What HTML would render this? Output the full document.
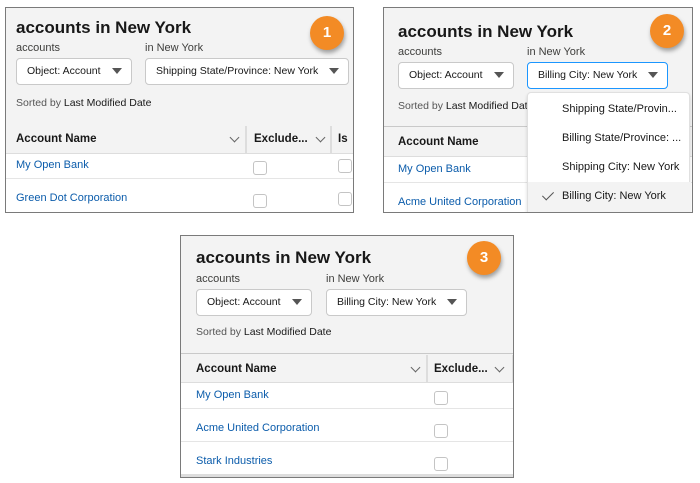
<!DOCTYPE html>
<html><head><style>
*{box-sizing:border-box;margin:0;padding:0}
body{width:700px;height:483px;background:#fff;position:relative;overflow:hidden;font-family:"Liberation Sans",Arial,sans-serif;color:#181818}
.p{position:absolute;border:1px solid #7a7a7a;background:#fff;overflow:hidden}
.hd{position:absolute;left:0;right:0;top:0;background:#f3f3f3;border-bottom:1px solid #c9c9c9}
.a{position:absolute;white-space:nowrap}
.t{font-size:17px;font-weight:bold}
.l{font-size:11px;color:#3e3e3c}
.s{position:absolute;height:27px;border:1px solid #c9c9c9;border-radius:4px;background:#fff;font-size:10.5px;padding:0 0 0 10px;line-height:25px;white-space:nowrap}
.s:after{content:"";position:absolute;right:9px;top:9px;border-left:5px solid transparent;border-right:5px solid transparent;border-top:6px solid #555}
.so{font-size:10.5px;color:#555}
.so b{font-weight:normal;color:#181818}
.th{position:absolute;left:0;right:0;background:#f3f3f3;border-bottom:1px solid #ddd;font-size:11.5px;font-weight:bold}
.cv{position:absolute;width:7px;height:7px;border-right:1.3px solid #666;border-bottom:1.3px solid #666;transform:rotate(45deg)}
.dv{position:absolute;width:2px;background:#ddd}
.lk{position:absolute;font-size:11px;color:#0b5cab;white-space:nowrap}
.cb{position:absolute;width:14px;height:14px;border:1px solid #c4c4c4;border-radius:3px;background:#fff}
.rl{position:absolute;left:0;right:0;height:1px;background:#e5e5e5}
.bd{position:absolute;width:34px;height:34px;border-radius:50%;background:#f38b25;color:#fff;font-weight:bold;font-size:15px;text-align:center;line-height:34px;box-shadow:1px 3px 4px rgba(0,0,0,.35)}
</style></head><body>

<!-- Panel 1 -->
<div class="p" style="left:5px;top:7px;width:349px;height:206px">
 <div class="hd" style="height:118px"></div>
 <div class="a t" style="left:10px;top:10px">accounts in New York</div>
 <div class="a l" style="left:10px;top:34px">accounts</div>
 <div class="a l" style="left:139px;top:34px">in New York</div>
 <div class="s" style="left:10px;top:50px;width:116px">Object: Account</div>
 <div class="s" style="left:139px;top:50px;width:204px">Shipping State/Province: New York</div>
 <div class="a so" style="left:10px;top:89px">Sorted by <b>Last Modified Date</b></div>
 <div class="th" style="top:117px;height:29px"><span class="a" style="left:10px;top:8px">Account Name</span><span class="a" style="left:248px;top:8px">Exclude...</span><span class="a" style="left:332px;top:8px">Is</span></div>
 <div class="cv" style="left:225px;top:126px"></div><div class="cv" style="left:311px;top:126px"></div>
 <div class="dv" style="left:239px;top:118px;height:27px"></div><div class="dv" style="left:324px;top:118px;height:27px"></div>
 <div class="lk" style="left:10px;top:151px">My Open Bank</div>
 <div class="cb" style="left:247px;top:153px"></div><div class="cb" style="left:332px;top:151px"></div>
 <div class="rl" style="top:170px"></div>
 <div class="lk" style="left:10px;top:184px">Green Dot Corporation</div>
 <div class="cb" style="left:247px;top:186px"></div><div class="cb" style="left:332px;top:184px"></div>
 <div class="bd" style="left:304px;top:8px">1</div>
</div>

<!-- Panel 2 -->
<div class="p" style="left:383px;top:7px;width:310px;height:206px">
 <div class="hd" style="height:119px"></div>
 <div class="a t" style="left:14px;top:14px">accounts in New York</div>
 <div class="a l" style="left:14px;top:38px">accounts</div>
 <div class="a l" style="left:143px;top:38px">in New York</div>
 <div class="s" style="left:14px;top:54px;width:116px">Object: Account</div>
 <div class="s" style="left:143px;top:54px;width:141px;border-color:#1b96ff">Billing City: New York</div>
 <div class="a so" style="left:14px;top:92px">Sorted by <b>Last Modified Date</b></div>
 <div class="th" style="top:119px;height:30px"><span class="a" style="left:14px;top:9px">Account Name</span></div>
 <div class="lk" style="left:14px;top:155px">My Open Bank</div>
 <div class="rl" style="top:174px"></div>
 <div class="lk" style="left:14px;top:188px">Acme United Corporation</div>
 <div class="a" style="left:143px;top:84px;width:163px;height:125px;background:#fff;border:1px solid #e0e0e0;border-radius:4px;box-shadow:0 2px 3px rgba(0,0,0,.15);font-size:11px">
  <div class="a" style="left:34px;top:10px">Shipping State/Provin...</div>
  <div class="a" style="left:34px;top:39px">Billing State/Province: ...</div>
  <div class="a" style="left:34px;top:68px">Shipping City: New York</div>
  <div class="a" style="left:0;top:89px;width:163px;height:34px;background:#f3f3f3"></div>
  <div class="a" style="left:34px;top:97px">Billing City: New York</div>
  <div class="a" style="left:17px;top:96px;width:6px;height:11px;border-right:1.3px solid #555;border-bottom:1.3px solid #555;transform:rotate(45deg)"></div>
 </div>
 <div class="bd" style="left:266px;top:6px">2</div>
</div>

<!-- Panel 3 -->
<div class="p" style="left:180px;top:235px;width:334px;height:243px">
 <div class="hd" style="height:118px"></div>
 <div class="a t" style="left:15px;top:12px">accounts in New York</div>
 <div class="a l" style="left:15px;top:37px">accounts</div>
 <div class="a l" style="left:145px;top:37px">in New York</div>
 <div class="s" style="left:15px;top:53px;width:116px">Object: Account</div>
 <div class="s" style="left:145px;top:53px;width:141px">Billing City: New York</div>
 <div class="a so" style="left:15px;top:90px">Sorted by <b>Last Modified Date</b></div>
 <div class="th" style="top:118px;height:29px"><span class="a" style="left:15px;top:9px">Account Name</span><span class="a" style="left:253px;top:9px">Exclude...</span></div>
 <div class="cv" style="left:231px;top:128px"></div><div class="cv" style="left:315px;top:128px"></div>
 <div class="dv" style="left:245px;top:119px;height:27px"></div><div class="dv" style="left:331px;top:119px;height:27px"></div>
 <div class="lk" style="left:15px;top:153px">My Open Bank</div><div class="cb" style="left:253px;top:155px"></div>
 <div class="rl" style="top:172px"></div>
 <div class="lk" style="left:15px;top:186px">Acme United Corporation</div><div class="cb" style="left:253px;top:188px"></div>
 <div class="rl" style="top:205px"></div>
 <div class="lk" style="left:15px;top:219px">Stark Industries</div><div class="cb" style="left:253px;top:221px"></div>
 <div class="a" style="left:0;right:0;bottom:0;height:3px;background:#ddd"></div>
 <div class="bd" style="left:286px;top:5px">3</div>
</div>
</body></html>
